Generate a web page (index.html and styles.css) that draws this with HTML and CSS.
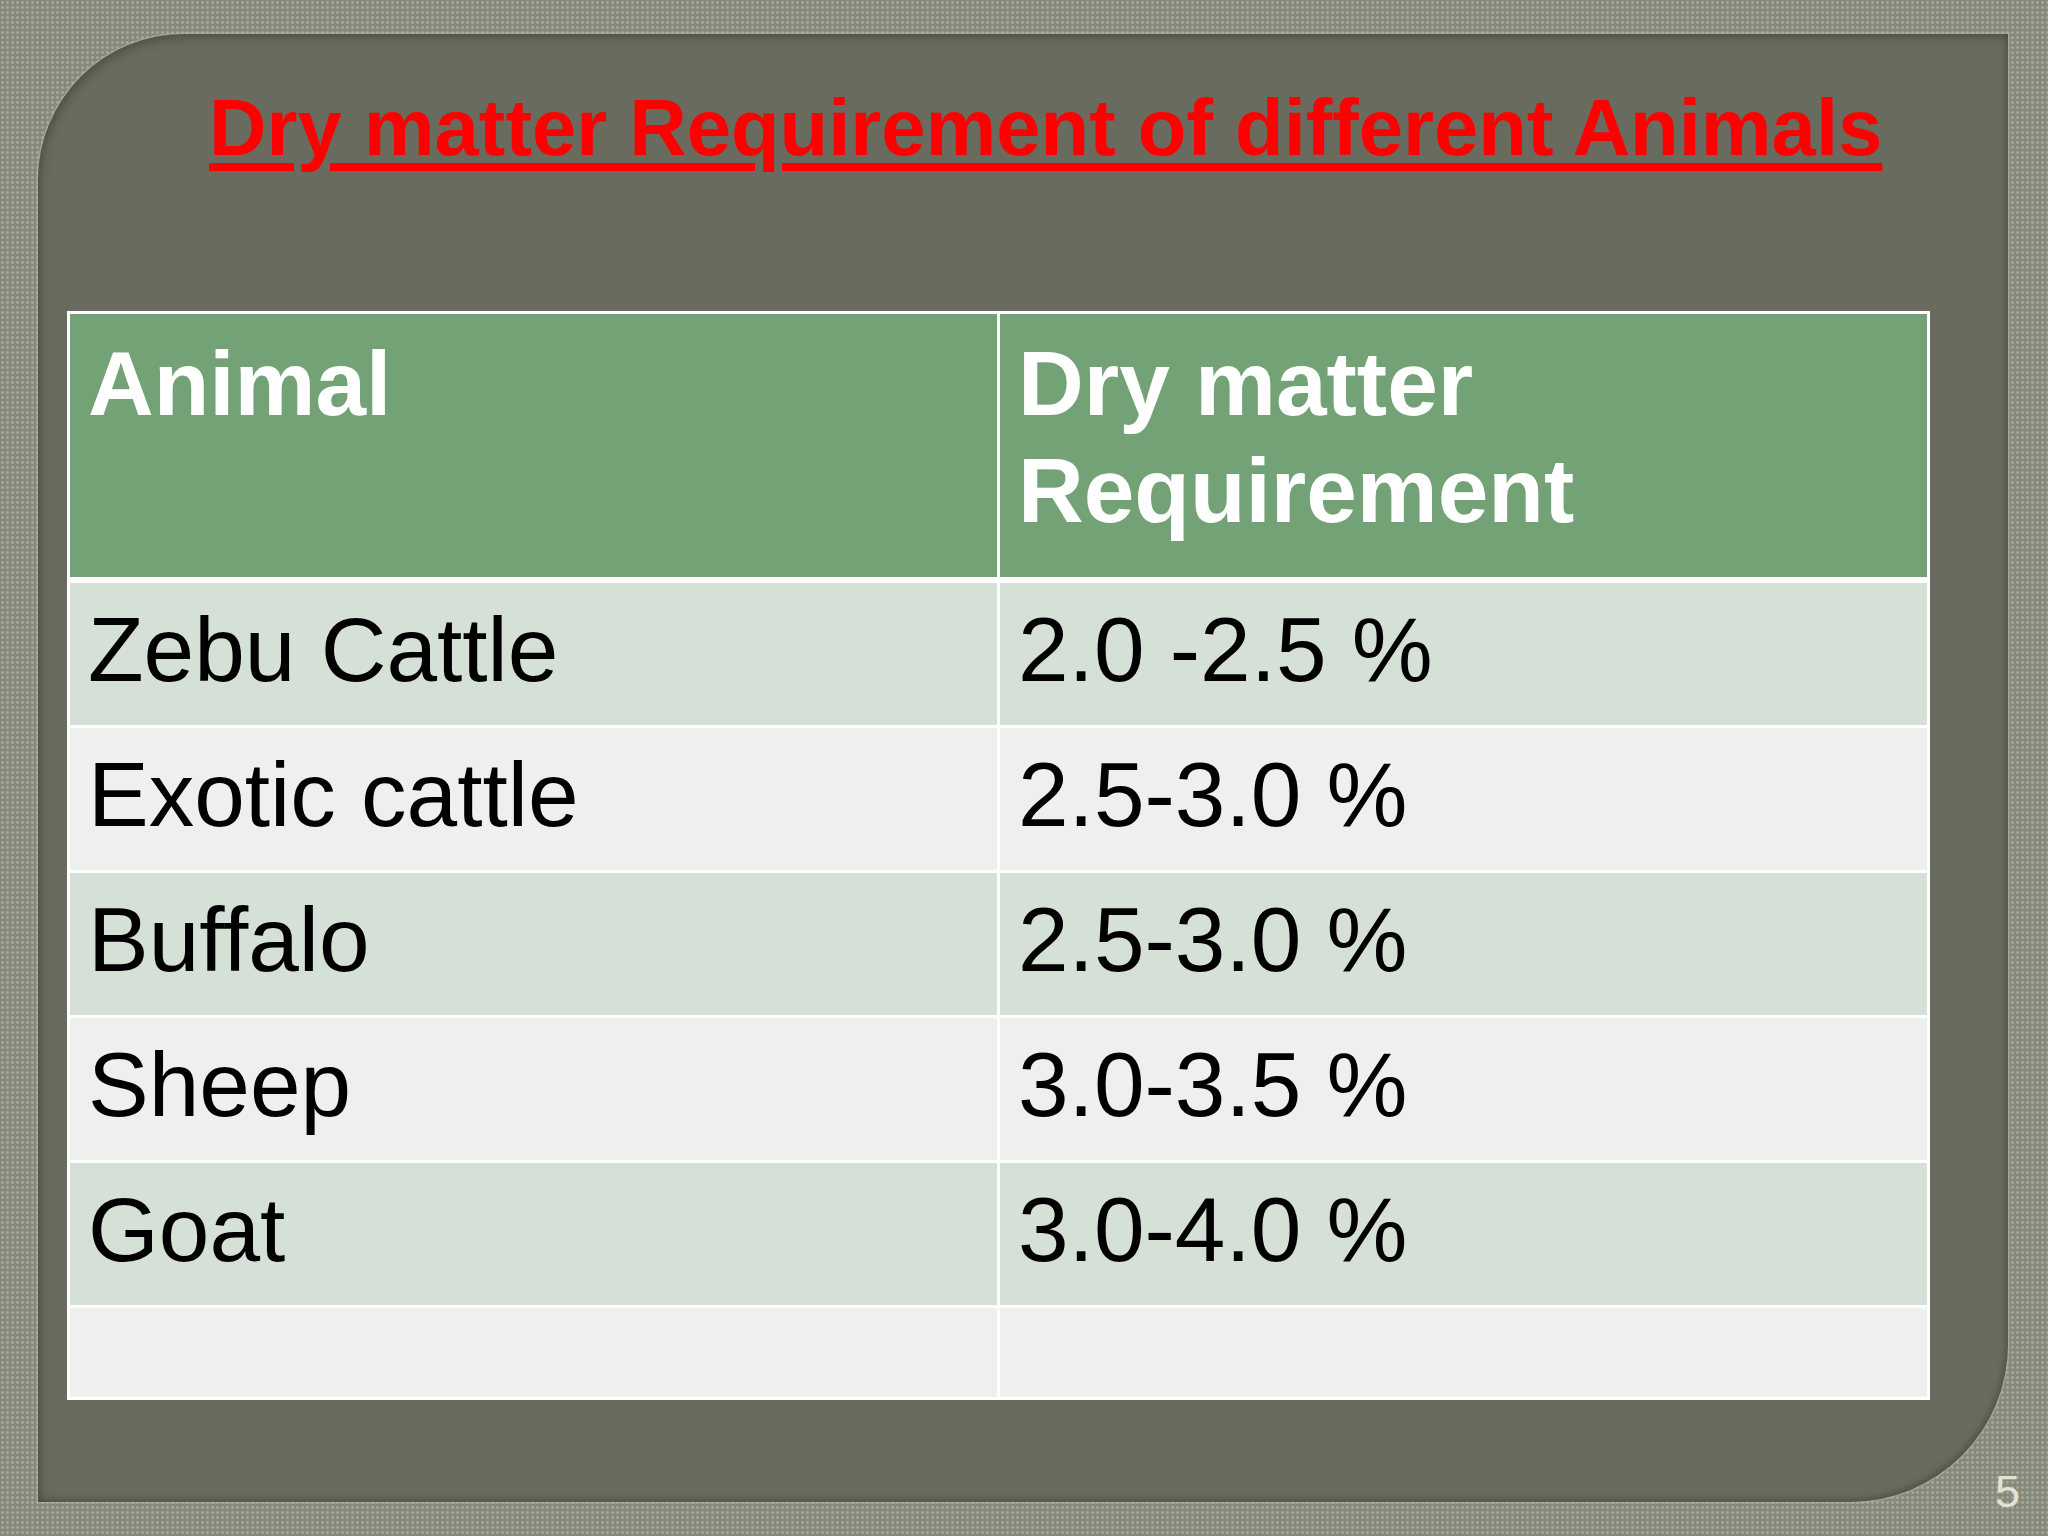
FILE: index.html
```html
<!DOCTYPE html>
<html lang="en">
<head>
<meta charset="utf-8">
<title>Dry matter Requirement of different Animals</title>
<link rel="stylesheet" href="styles.css">
</head>
<body>
  <div class="slide">
    <h1 class="title">Dry matter Requirement of different Animals</h1>
    <div class="grid">
      <div class="cell head">Animal</div>
      <div class="cell head">Dry matter<br>Requirement</div>

      <div class="cell dark">Zebu Cattle</div>
      <div class="cell dark">2.0 -2.5 %</div>

      <div class="cell light">Exotic cattle</div>
      <div class="cell light">2.5-3.0 %</div>

      <div class="cell dark">Buffalo</div>
      <div class="cell dark">2.5-3.0 %</div>

      <div class="cell light">Sheep</div>
      <div class="cell light">3.0-3.5 %</div>

      <div class="cell dark">Goat</div>
      <div class="cell dark">3.0-4.0 %</div>

      <div class="cell light last"></div>
      <div class="cell light last"></div>
    </div>
  </div>
  <div class="pagenum">5</div>
</body>
</html>
```

FILE: styles.css
```css
html, body {
  margin: 0;
}

body {
  position: relative;
  width: 2048px;
  height: 1536px;
  box-sizing: border-box;
  padding: 34px 40px 34px 38px;
  overflow: hidden;
  background-color: #878a7b;
  background-image: radial-gradient(circle, rgba(196, 199, 182, 0.5) 1px, transparent 1.7px);
  background-size: 5px 5px;
  font-family: "Liberation Sans", Arial, sans-serif;
}

.slide {
  width: 1970px;
  height: 1468px;
  box-sizing: border-box;
  padding: 48px 78px 0 29px;
  background: #686b5e;
  border-radius: 146px 0 158px 0;
  box-shadow:
    inset 3px 4px 8px rgba(40, 42, 34, 0.35),
    inset -2px -3px 6px rgba(40, 42, 34, 0.3),
    0 0 0 1.5px rgba(176, 179, 162, 0.6);
}

.title {
  margin: 0;
  padding-left: 142px;
  font-weight: bold;
  font-size: 79.6px;
  line-height: 92px;
  color: #ff0000;
  white-space: nowrap;
  text-decoration: underline;
  text-decoration-thickness: 8px;
  text-underline-offset: 8px;
}

.grid {
  margin-top: 137px;
  width: 1863px;
  box-sizing: border-box;
  padding: 3px;
  background: #ffffff;
  display: grid;
  grid-template-columns: 927px 927px;
  column-gap: 3px;
  row-gap: 3px;
}

.cell {
  box-sizing: border-box;
  height: 142px;
  padding: 13px 18px 0 18px;
  font-size: 91px;
  line-height: 107px;
  color: #000000;
  white-space: nowrap;
}

.head {
  height: 263px;
  margin-bottom: 3px;
  padding-top: 16px;
  background: #72a276;
  color: #ffffff;
  font-weight: bold;
}

.dark {
  background: #d5e0d7;
}

.light {
  background: #edf0ed;
}

.last {
  height: 89px;
}

.pagenum {
  position: absolute;
  left: 1995px;
  top: 1469px;
  font-size: 45px;
  line-height: 45px;
  color: #e2e3d6;
}
```
